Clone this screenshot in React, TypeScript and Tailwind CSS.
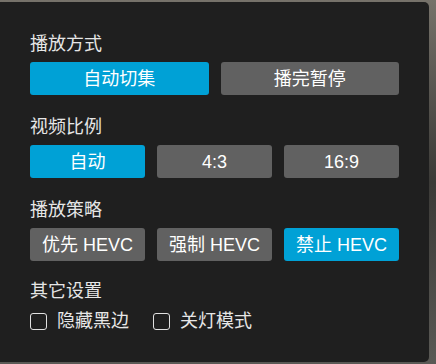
const font = { fontFamily: '"Liberation Sans", "Noto Sans CJK SC", sans-serif' };

function Group({ label, children }: { label: string; children: React.ReactNode }) {
  return (
    <section>
      <h4 className="h-6 text-[18px] leading-6 text-[#e6e6e6]">{label}</h4>
      {children}
    </section>
  );
}

function Btn({ text, active }: { text: string; active?: boolean }) {
  return (
    <button
      className={`flex-1 h-[33px] rounded-[3px] text-[18px] leading-6 text-white ${
        active ? "bg-[#00a1d6]" : "bg-[#616161]"
      }`}
    >
      {text}
    </button>
  );
}

function Check({ text }: { text: string }) {
  return (
    <label className="flex items-center gap-[10px]">
      <span className="w-[17px] h-[17px] rounded-[3px] border-[1.5px] border-[#e0e0e0]" />
      <span className="text-[18px] leading-6 text-[#e6e6e6]">{text}</span>
    </label>
  );
}

export default function App() {
  return (
    <div
      className="w-[436px] h-[364px] pt-[2px] bg-gradient-to-b from-[#76726a] via-[#3b3a37] to-[#5a5955] overflow-hidden"
      style={font}
    >
      <div className="w-[429px] h-[360px] rounded-r-[5px] bg-[#1f1f1f] px-[30px] pt-[30px]">
        <Group label="播放方式">
          <div className="mt-[6px] flex gap-[12px]">
            <Btn text="自动切集" active />
            <Btn text="播完暂停" />
          </div>
        </Group>
        <div className="mt-[20px]">
          <Group label="视频比例">
            <div className="mt-[6px] flex gap-[12px]">
              <Btn text="自动" active />
              <Btn text="4:3" />
              <Btn text="16:9" />
            </div>
          </Group>
        </div>
        <div className="mt-[20px]">
          <Group label="播放策略">
            <div className="mt-[6px] flex gap-[12px]">
              <Btn text="优先 HEVC" />
              <Btn text="强制 HEVC" />
              <Btn text="禁止 HEVC" active />
            </div>
          </Group>
        </div>
        <div className="mt-[18px]">
          <Group label="其它设置">
            <div className="mt-[6px] h-6 flex items-center gap-[24px]">
              <Check text="隐藏黑边" />
              <Check text="关灯模式" />
            </div>
          </Group>
        </div>
      </div>
    </div>
  );
}
